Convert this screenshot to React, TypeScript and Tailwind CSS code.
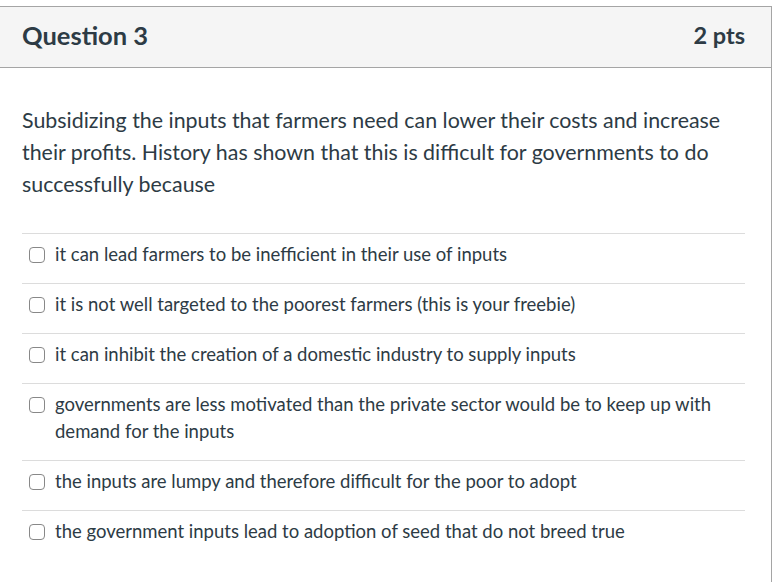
import React from 'react';

const answers = [
  'it can lead farmers to be inefficient in their use of inputs',
  'it is not well targeted to the poorest farmers (this is your freebie)',
  'it can inhibit the creation of a domestic industry to supply inputs',
  'governments are less motivated than the private sector would be to keep up with demand for the inputs',
  'the inputs are lumpy and therefore difficult for the poor to adopt',
  'the government inputs lead to adoption of seed that do not breed true',
];

export default function App() {
  return (
    <div className="w-[777px] h-[582px] bg-white overflow-hidden pt-[6px] text-[#2d3b45]" style={{ fontFamily: 'Lato, "Open Sans", sans-serif' }}>
      <div className="w-[772px] h-[600px] border-t border-r border-[#a5a5a5]">
        {/* header */}
        <div className="h-[61px] bg-[#f5f5f5] border-b border-[#a5a5a5] flex items-center justify-between pl-[22px] pr-[26px] pb-[3px]">
          <h2 className="text-[25.5px] font-bold">Question 3</h2>
          <span className="text-[23.5px] font-bold">2 pts</span>
        </div>

        <div className="pl-[22px] pr-[26px]">
          <p className="mt-[36px] text-[21.4px] leading-[32px] pr-[10px]">
            Subsidizing the inputs that farmers need can lower their costs and increase their profits. History has shown that this is difficult for governments to do successfully because
          </p>

          <div className="mt-[33px]">
            {answers.map(a => (
              <label key={a} className="flex items-start border-t border-[#dcdcdc] pt-[7px] pb-[15px] pl-[7px]">
                <span className="mt-[6px] w-[16px] h-[16px] shrink-0 rounded-[4px] border-[1.5px] border-[#888] bg-white" />
                <span className="ml-[10px] text-[18.5px] leading-[27px] pr-[20px]">{a}</span>
              </label>
            ))}
          </div>
        </div>
      </div>
    </div>
  );
}
